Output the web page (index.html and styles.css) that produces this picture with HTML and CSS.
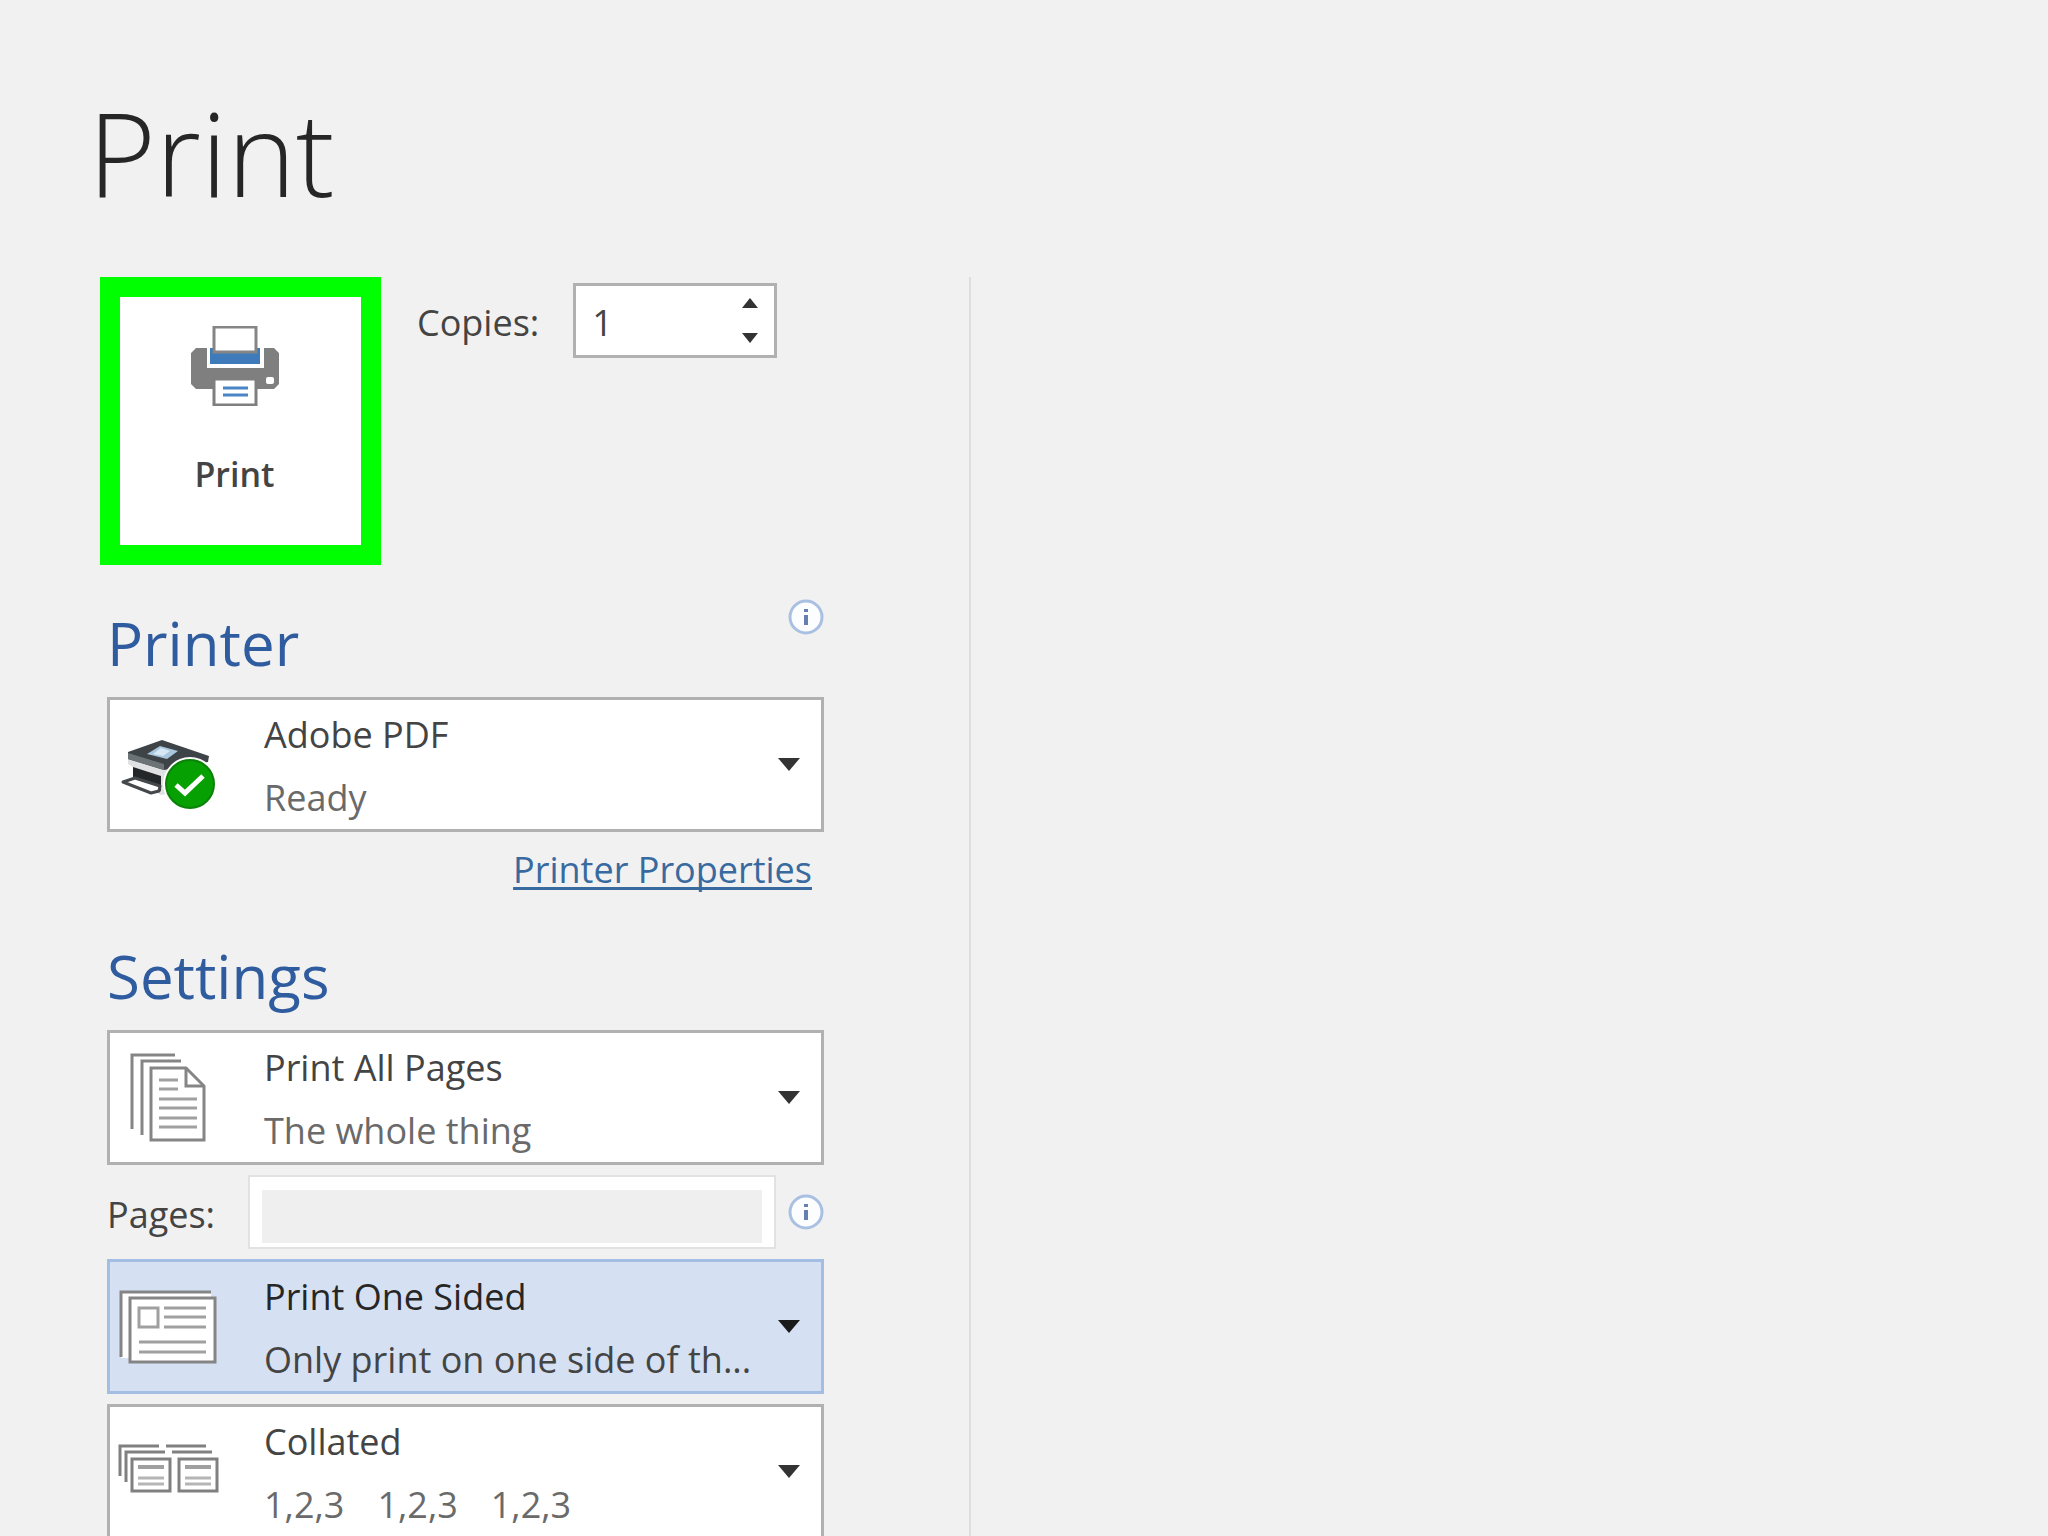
FILE: index.html
```
<!DOCTYPE html>
<html lang="en">
<head>
  <meta charset="UTF-8"/>
  <meta name="viewport" content="width=device-width,initial-scale=1"/>
  <title>Print</title>
  <link rel="stylesheet" href="styles.css">
</head>
<body>
  <main>
    <h1>Print</h1>

    <form class="panel">
      <div class="top-row">
        <button type="button" class="print-btn">
          <svg width="88" height="80" viewBox="0 0 88 80">
            <path fill="#7f7f7f" d="M5 22h11v20h57V22h10l5 5v31l-5 5H5l-5-5V27z"/>
            <rect x="19" y="22" width="50" height="16" fill="#3f7abb"/>
            <rect x="23" y="1" width="42" height="25" fill="#fff" stroke="#858585" stroke-width="3"/>
            <rect x="23" y="53" width="42" height="26" fill="#fff" stroke="#7f7f7f" stroke-width="3"/>
            <path stroke="#4a86c5" stroke-width="3" d="M32 62h25M32 69h25"/>
            <rect x="75" y="51" width="8" height="7" rx="2" fill="#fff"/>
          </svg>
          <span>Print</span>
        </button>
        <label for="copies">Copies:</label>
        <div class="spinner">
          <input type="number" id="copies" value="1" min="1">
          <div class="spinner-btns">
            <button type="button" aria-label="More copies"><svg width="16" height="10" viewBox="0 0 16 10"><path d="M0 10L8 0l8 10z"/></svg></button>
            <button type="button" aria-label="Fewer copies"><svg width="16" height="10" viewBox="0 0 16 10"><path d="M0 0h16L8 10z"/></svg></button>
          </div>
        </div>
      </div>

      <div class="section-head">
        <h2 id="printerTitle">Printer</h2>
        <button type="button" class="info" aria-label="Printer info">
          <svg width="36" height="36" viewBox="0 0 36 36"><circle cx="18" cy="18" r="16" fill="#fcfdff" stroke="#a9c0e2" stroke-width="3"/><path fill="#6580b0" d="M16 10h4v3h-4zM16 16h4v10h-4z"/></svg>
        </button>
      </div>

      <div class="combo">
        <select aria-labelledby="printerTitle">
          <option>Adobe PDF</option>
        </select>
        <svg class="combo-icon" width="95" height="92" viewBox="0 -20 95 92">
          <path fill="#dfe1e3" d="M7 19l36 11 10-3v27l-13 2-28-15V28l-5-3z"/>
          <path fill="#3d4347" d="M7 13L41 1l47 16-1 6-44 8L7 20z"/>
          <path fill="#6b7377" d="M7 14l36 11v6L7 20z"/>
          <path fill="#a9c6dc" d="M26 15L39 7l18 5-11 8z"/>
          <path fill="#d6e8f4" d="M32 15l8-6 9 3-7 5z"/>
          <path fill="#24272a" d="M12 28l28 9v15l-28-12z"/>
          <path fill="#fff" stroke="#45484b" stroke-width="3" stroke-linejoin="round" d="M2 43l12-4 25 8-1 5-8 2z"/>
          <circle cx="69" cy="45" r="27" fill="#fff"/>
          <circle cx="69" cy="45" r="24" fill="#06a003" stroke="#0b8208" stroke-width="2"/>
          <path fill="none" stroke="#fff" stroke-width="5" d="M55 46l9 8 18-17"/>
        </svg>
        <span class="combo-sub">Ready</span>
        <svg class="combo-arrow" width="22" height="13" viewBox="0 0 22 13"><path d="M0 0h22L11 13z"/></svg>
      </div>

      <div class="link-row"><a href="#">Printer Properties</a></div>

      <div class="section-head">
        <h2>Settings</h2>
      </div>

      <div class="combo">
        <select aria-label="Print range">
          <option>Print All Pages</option>
        </select>
        <svg class="combo-icon" width="76" height="89" viewBox="0 0 76 89" fill="none" stroke="#858585" stroke-width="3">
          <path d="M2 76V2h43M12 82V8h39"/>
          <path fill="#fff" d="M21 15h35l18 18v54H21z"/>
          <path d="M56 15v18h18"/>
          <path stroke="#a0a0a0" d="M29 27h19M29 36h19M29 46h38M29 55h38M29 65h38M29 74h38"/>
        </svg>
        <span class="combo-sub">The whole thing</span>
        <svg class="combo-arrow" width="22" height="13" viewBox="0 0 22 13"><path d="M0 0h22L11 13z"/></svg>
      </div>

      <div class="pages-row">
        <label for="pages">Pages:</label>
        <input type="text" id="pages">
        <button type="button" class="info" aria-label="Pages info">
          <svg width="36" height="36" viewBox="0 0 36 36"><circle cx="18" cy="18" r="16" fill="#fcfdff" stroke="#a9c0e2" stroke-width="3"/><path fill="#6580b0" d="M16 10h4v3h-4zM16 16h4v10h-4z"/></svg>
        </button>
      </div>

      <div class="combo active">
        <select aria-label="Sides">
          <option>Print One Sided</option>
        </select>
        <svg class="combo-icon" width="98" height="74" viewBox="0 0 98 74" fill="none" stroke="#858585" stroke-width="3">
          <path fill="#fff" stroke="none" d="M2 2h90v6H11v60H2z"/>
          <path d="M2 67V2h90"/>
          <rect x="11" y="8" width="85" height="64" fill="#fff"/>
          <g stroke="#a0a0a0">
            <rect x="20" y="18" width="19" height="19"/>
            <path d="M45 18h42M45 27h42M45 37h42M20 52h67M20 62h67"/>
          </g>
        </svg>
        <span class="combo-sub">Only print on one side of th...</span>
        <svg class="combo-arrow" width="22" height="13" viewBox="0 0 22 13"><path d="M0 0h22L11 13z"/></svg>
      </div>

      <div class="combo">
        <select aria-label="Collation">
          <option>Collated</option>
        </select>
        <svg class="combo-icon" width="101" height="56" viewBox="0 0 101 56" fill="none" stroke="#808080" stroke-width="3">
          <path d="M2 32V2h39M48 2h40M8 38V8h39M54 8h40"/>
          <path d="M14 15h38v32H14zM61 15h38v32H61z"/>
          <path stroke="#a0a0a0" stroke-width="4" d="M20 23h26M67 23h26"/>
          <path stroke="#b5b5b5" d="M20 34h26M20 40h26M67 34h26M67 40h26"/>
        </svg>
        <span class="combo-sub sets"><span>1,2,3</span><span>1,2,3</span><span>1,2,3</span></span>
        <svg class="combo-arrow" width="22" height="13" viewBox="0 0 22 13"><path d="M0 0h22L11 13z"/></svg>
      </div>
    </form>
  </main>
</body>
</html>
```

FILE: styles.css
```
:root {
  --bg: #f1f1f1;
  --text: #444;
  --text-light: #6a6a6a;
  --blue: #2f5b9f;
  --border: #b1b1b1;
  --highlight: #00ff00;
}

* {
  box-sizing: border-box;
  margin: 0;
  padding: 0;
}

body {
  background: var(--bg);
  color: var(--text);
  font-family: 'Open Sans', 'Noto Sans', sans-serif;
  font-size: 36px;
  line-height: 48px;
}

main {
  display: flex;
  flex-direction: column;
  height: 100vh;
  padding: 72px 0 0 88px;
  overflow: hidden;
}

h1 {
  color: #262626;
  font-size: 116px;
  font-weight: 300;
  line-height: 160px;
}

h2 {
  color: var(--blue);
  font-size: 60px;
  font-weight: 400;
  line-height: 72px;
}

button, input, select {
  font: inherit;
  color: inherit;
  border: none;
  background: none;
}

.panel {
  flex: 1;
  min-height: 0;
  max-width: 883px;
  margin-top: 45px;
  padding: 0 145px 0 19px;
  border-right: 2px solid #dedede;
}

.top-row {
  display: flex;
  align-items: flex-start;
  margin-left: -7px;
}

.top-row label {
  margin: 22px 34px 0 36px;
}

.print-btn {
  display: flex;
  flex-direction: column;
  align-items: center;
  gap: 44px;
  width: 281px;
  height: 288px;
  padding: 29px 12px 0 0;
  background: #fff;
  border: 20px solid var(--highlight);
  font-size: 34px;
  font-weight: 600;
}

.spinner {
  display: flex;
  width: 204px;
  height: 75px;
  margin-top: 6px;
  background: #fff;
  border: 3px solid var(--border);
}

.spinner input {
  flex: 1;
  min-width: 0;
  padding: 4px 0 0 16px;
  appearance: textfield;
}

.spinner input::-webkit-inner-spin-button {
  appearance: none;
}

.spinner-btns {
  display: flex;
  flex-direction: column;
  justify-content: center;
  width: 48px;
}

.spinner-btns button {
  display: flex;
  align-items: center;
  justify-content: center;
  height: 37px;
  fill: #333;
}

.section-head {
  display: flex;
  justify-content: space-between;
  align-items: flex-start;
  margin: 34px 0 18px;
}

.section-head h2 {
  margin-top: 8px;
}

.info {
  display: flex;
}

/* the select fills the whole card, icon and second line lie on top of it */
.combo {
  display: grid;
  grid-template-columns: 122px 1fr 70px;
  align-items: center;
  height: 135px;
  margin-bottom: 10px;
}

.combo > * {
  grid-row: 1;
  pointer-events: none;
}

.combo select {
  grid-column: 1 / -1;
  width: 100%;
  height: 135px;
  padding: 0 70px 60px 154px;
  background: #fff;
  border: 3px solid var(--border);
  appearance: none;
  pointer-events: auto;
}

.combo-icon {
  grid-column: 1;
  justify-self: center;
}

.combo-sub {
  grid-column: 2;
  align-self: end;
  margin: 0 0 10px 35px;
  white-space: nowrap;
  color: var(--text-light);
}

.combo-arrow {
  grid-column: 3;
  justify-self: center;
  fill: #333;
}

.combo.active select {
  color: #262626;
  background: #d5e1f2;
  border-color: #a3bde3;
}

.combo.active .combo-sub {
  color: #444;
}

.combo.active .combo-arrow {
  fill: #1a1a1a;
}

.sets {
  display: flex;
  gap: 33px;
}

.link-row {
  margin: 14px 12px 0;
  text-align: right;
}

.link-row a {
  color: #386a9f;
  text-decoration-thickness: 3px;
  text-underline-offset: 4px;
  text-decoration-skip-ink: none;
}

.link-row + .section-head {
  margin-top: 38px;
}

.pages-row {
  display: flex;
  align-items: center;
  margin-bottom: 10px;
}

.pages-row label {
  width: 141px;
  padding-top: 6px;
}

.pages-row input {
  flex: 1;
  min-width: 0;
  height: 74px;
  margin-right: 12px;
  padding: 13px 12px 4px;
  background: linear-gradient(#efefef, #efefef) content-box, #fff;
  border: 2px solid #e2e2e2;
}
```
